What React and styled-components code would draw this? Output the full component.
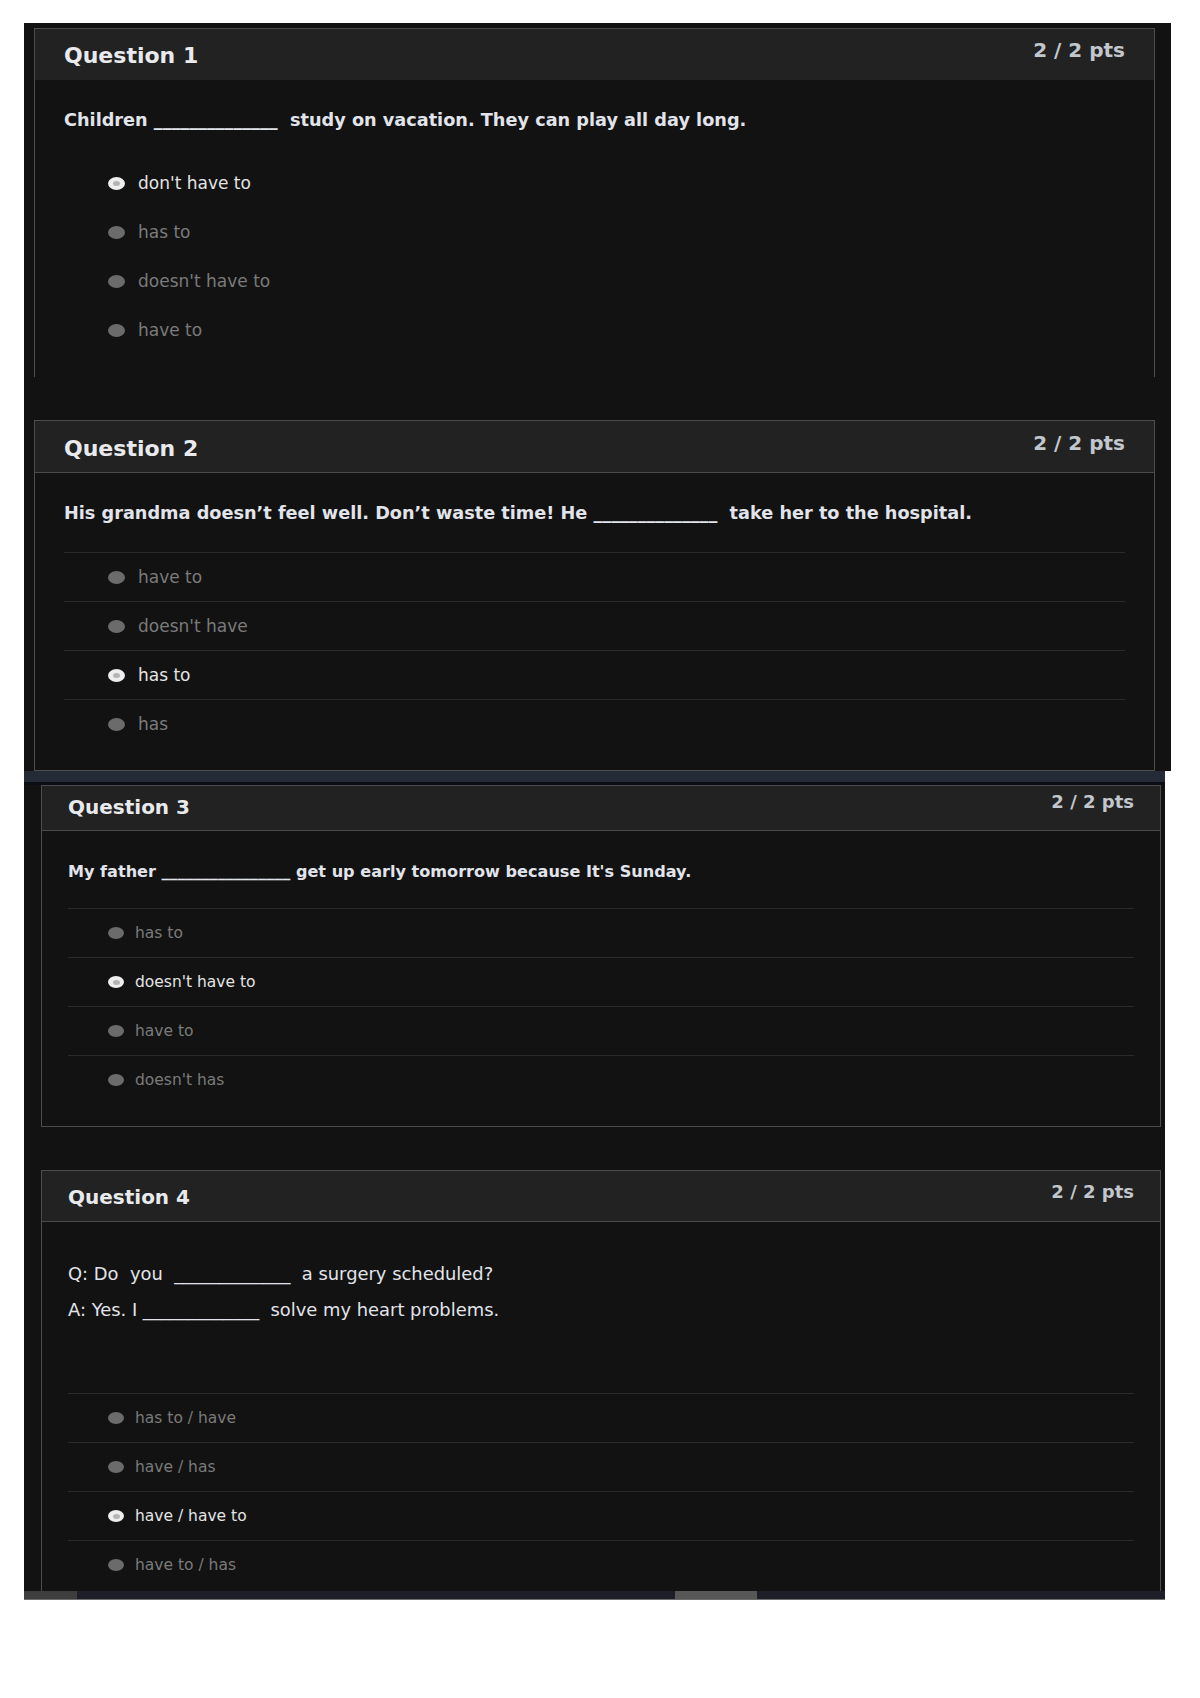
import React from "react";
import styled, { createGlobalStyle } from "styled-components";

const GlobalStyle = createGlobalStyle`
  html, body { margin: 0; padding: 0; background: #ffffff; }
  body { font-family: "DejaVu Sans", "Liberation Sans", sans-serif; }
  * { box-sizing: border-box; }
`;

const Page = styled.div`
  display: flex;
  flex-direction: column;
  align-items: flex-start;
  padding: 23px 0 98px 24px;
`;

const ShotTop = styled.section`
  width: 1147px;
  background: #121212;
  display: flex;
  flex-direction: column;
  gap: 43px;
  padding: 5px 16px 0 10px;
`;

const ShotBottom = styled.section`
  width: 1141px;
  background: #121212;
  display: flex;
  flex-direction: column;
`;

const Band = styled.div`
  height: 14px;
  background: #252a37;
  border-bottom: 3px solid #0b0d15;
`;

const Inner = styled.div`
  display: flex;
  flex-direction: column;
  gap: 43px;
  padding: 0 4px 0 17px;
`;

const Card = styled.article`
  background: #121212;
  border: 1px solid #4d4d4d;
  border-bottom: ${(p) => (p.$open ? "none" : "1px solid #4d4d4d")};
  display: flex;
  flex-direction: column;
`;

const Header = styled.header`
  height: ${(p) => p.$h}px;
  background: #222222;
  display: flex;
  justify-content: space-between;
  align-items: flex-start;
  padding: 0 ${(p) => p.$px}px;
  border-bottom: ${(p) => (p.$divided ? "1px solid #4a4a4a" : "none")};
  box-sizing: content-box;
`;

const Title = styled.h2`
  margin: 0;
  padding-top: ${(p) => p.$top}px;
  font-size: ${(p) => (p.$sm ? 20 : 22)}px;
  line-height: ${(p) => (p.$sm ? 24 : 26)}px;
  font-weight: 700;
  color: #e8eaee;
`;

const Points = styled.span`
  padding-top: ${(p) => p.$top}px;
  font-size: ${(p) => (p.$sm ? 18 : 20)}px;
  line-height: ${(p) => (p.$sm ? 22 : 24)}px;
  font-weight: 700;
  color: #c2c6cd;
`;

const Body = styled.div`
  display: flex;
  flex-direction: column;
  padding: ${(p) => p.$pt}px ${(p) => p.$px}px ${(p) => p.$pb}px;
`;

const Prompt = styled.div`
  display: flex;
  flex-direction: column;
  gap: 12px;
  margin-bottom: ${(p) => p.$gap}px;
`;

const PromptLine = styled.p`
  margin: 0;
  font-size: ${(p) => p.$size}px;
  line-height: 24px;
  font-weight: ${(p) => (p.$bold ? 700 : 400)};
  color: #e1e4ea;
  white-space: pre;
`;

const Options = styled.ul`
  list-style: none;
  margin: 0;
  padding: 0;
  display: flex;
  flex-direction: column;
`;

const Option = styled.li`
  height: 49px;
  display: flex;
  align-items: center;
  gap: ${(p) => (p.$sm ? 11 : 13)}px;
  padding-left: ${(p) => (p.$sm ? 40 : 44)}px;
  border-top: 1px solid ${(p) => (p.$lined ? "#2a2a2a" : "transparent")};
  font-size: ${(p) => (p.$sm ? 15.5 : 17)}px;
  color: ${(p) => (p.$checked ? "#e4e4e4" : "#7a7a7a")};
`;

const Radio = styled.span`
  flex: none;
  width: ${(p) => (p.$sm ? 16 : 17)}px;
  height: ${(p) => (p.$sm ? 12 : 13)}px;
  border-radius: 50%;
  background: ${(p) => (p.$checked ? "#eeeeee" : "#6b6b6b")};
  display: flex;
  align-items: center;
  justify-content: center;
  &::after {
    content: "";
    display: ${(p) => (p.$checked ? "block" : "none")};
    width: 7px;
    height: 5px;
    border-radius: 50%;
    background: #b4b4b4;
  }
`;

const ScrollBar = styled.div`
  height: 9px;
  background: #1d1e28;
  border-bottom: 1px solid #6d6d6d;
  display: flex;
`;

const Thumb = styled.span`
  width: ${(p) => p.$w}px;
  margin-left: ${(p) => p.$offset}px;
  background: ${(p) => p.$color};
`;

const U = (n) => "_".repeat(n);
const S = "\u00a0";

const questions = [
  {
    n: 1,
    sm: false,
    open: true,
    divided: false,
    header: { h: 51, titleTop: 14, ptsTop: 9, px: 29 },
    body: { pt: 28, pb: 23, px: 29, gap: 26 },
    lined: false,
    lines: [`Children ${U(14)}${S} study on vacation. They can play all day long.`],
    bold: true,
    size: 17.7,
    options: ["don't have to", "has to", "doesn't have to", "have to"],
    checked: 0,
  },
  {
    n: 2,
    sm: false,
    open: false,
    divided: true,
    header: { h: 51, titleTop: 15, ptsTop: 10, px: 29 },
    body: { pt: 28, pb: 22, px: 29, gap: 27 },
    lined: true,
    lines: [
      `His grandma doesn’t feel well. Don’t waste time! He ${U(14)}${S} take her to the hospital.`,
    ],
    bold: true,
    size: 17.7,
    options: ["have to", "doesn't have", "has to", "has"],
    checked: 2,
  },
];

const questionsB = [
  {
    n: 3,
    sm: true,
    open: false,
    divided: true,
    header: { h: 44, titleTop: 9, ptsTop: 5, px: 26 },
    body: { pt: 29, pb: 22, px: 26, gap: 24 },
    lined: true,
    lines: [`My father ${U(16)} get up early tomorrow because It's Sunday.`],
    bold: true,
    size: 16.1,
    options: ["has to", "doesn't have to", "have to", "doesn't has"],
    checked: 1,
  },
  {
    n: 4,
    sm: true,
    open: true,
    divided: true,
    header: { h: 50, titleTop: 14, ptsTop: 10, px: 26 },
    body: { pt: 40, pb: 2, px: 26, gap: 71 },
    lined: true,
    lines: [
      `Q: Do${S} you${S} ${U(13)}${S} a surgery scheduled?`,
      `A: Yes. I ${U(13)}${S} solve my heart problems.`,
    ],
    bold: false,
    size: 17.9,
    options: ["has to / have", "have / has", "have / have to", "have to / has"],
    checked: 2,
  },
];

function Question({ q }) {
  return (
    <Card $open={q.open}>
      <Header $h={q.header.h} $px={q.header.px} $divided={q.divided}>
        <Title $top={q.header.titleTop} $sm={q.sm}>
          Question {q.n}
        </Title>
        <Points $top={q.header.ptsTop} $sm={q.sm}>
          2 / 2 pts
        </Points>
      </Header>
      <Body $pt={q.body.pt} $pb={q.body.pb} $px={q.body.px}>
        <Prompt $gap={q.body.gap}>
          {q.lines.map((l) => (
            <PromptLine key={l} $bold={q.bold} $size={q.size}>
              {l}
            </PromptLine>
          ))}
        </Prompt>
        <Options>
          {q.options.map((o, i) => (
            <Option key={o} $sm={q.sm} $lined={q.lined} $checked={i === q.checked}>
              <Radio $sm={q.sm} $checked={i === q.checked} />
              {o}
            </Option>
          ))}
        </Options>
      </Body>
    </Card>
  );
}

export default function App() {
  return (
    <>
      <GlobalStyle />
      <Page>
        <ShotTop>
          {questions.map((q) => (
            <Question key={q.n} q={q} />
          ))}
        </ShotTop>
        <ShotBottom>
          <Band />
          <Inner>
            {questionsB.map((q) => (
              <Question key={q.n} q={q} />
            ))}
          </Inner>
          <ScrollBar>
            <Thumb $w={53} $offset={0} $color="#3d3d3d" />
            <Thumb $w={82} $offset={598} $color="#575757" />
          </ScrollBar>
        </ShotBottom>
      </Page>
    </>
  );
}
